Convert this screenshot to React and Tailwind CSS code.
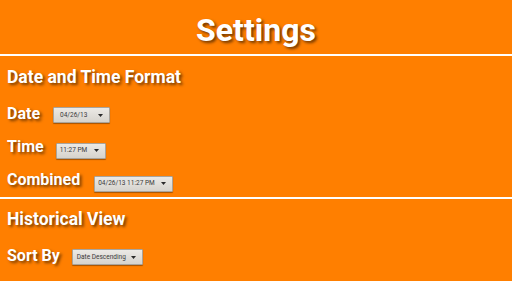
import React from "react";

const shadow = "[text-shadow:2px_2px_3px_rgba(0,0,0,0.55)]";

function Spinner({ text, w, pl, mt }) {
  return (
    <div
      className={`flex items-center h-[16px] ${w} ${pl} ${mt} pr-[6px] bg-gradient-to-b from-[#ebe9e5] to-[#d6d3cd] border border-[#a8a49d] rounded-[1px] shadow-[0_1px_1px_rgba(0,0,0,0.35)]`}
    >
      <span className="flex-1 text-[6.5px] leading-none text-[#3a3a3a] whitespace-nowrap [font-family:Roboto,sans-serif]">
        {text}
      </span>
      <svg width="5" height="3" viewBox="0 0 5 3" className="shrink-0">
        <path d="M0 0 L5 0 L2.5 3 Z" fill="#2a2a2a" />
      </svg>
    </div>
  );
}

function Row({ label, h, size = "text-[16px]", children }) {
  return (
    <div className={`flex items-center ${h}`}>
      <span className={`${size} leading-[20px] font-bold text-white ${shadow}`}>{label}</span>
      {children}
    </div>
  );
}

export default function App() {
  return (
    <div className="w-[512px] h-[281px] bg-[#ff7f00] overflow-hidden [font-family:Roboto,sans-serif]">
      <div className="flex justify-center items-center h-[54px]">
        <span className={`mt-[6px] text-[32px] leading-[38px] font-bold text-white ${shadow}`}>
          Settings
        </span>
      </div>
      <div className="h-[2px] bg-white" />
      <div className="pl-[7px] flex flex-col">
        <Row label="Date and Time Format" h="h-[41px]" size="text-[17.5px]" />
        <Row label="Date" h="h-[34px]">
          <div className="ml-[13px]">
            <Spinner text="04/26/13" w="w-[57px]" pl="pl-[6px]" mt="mt-[2px]" />
          </div>
        </Row>
        <Row label="Time" h="h-[32px]">
          <div className="ml-[12px]">
            <Spinner text="11:27 PM" w="w-[50px]" pl="pl-[3px]" mt="mt-[7px]" />
          </div>
        </Row>
        <Row label="Combined" h="h-[34px]">
          <div className="ml-[14px]">
            <Spinner text="04/26/13 11:27 PM" w="w-[79px]" pl="pl-[3px]" mt="mt-[7px]" />
          </div>
        </Row>
      </div>
      <div className="h-[2px] bg-white" />
      <div className="pl-[7px] flex flex-col">
        <Row label="Historical View" h="h-[40px]" size="text-[17.5px]" />
        <Row label="Sort By" h="h-[33px]">
          <div className="ml-[12px]">
            <Spinner text="Date Descending" w="w-[71px]" pl="pl-[4px]" mt="mt-[3px]" />
          </div>
        </Row>
      </div>
    </div>
  );
}
